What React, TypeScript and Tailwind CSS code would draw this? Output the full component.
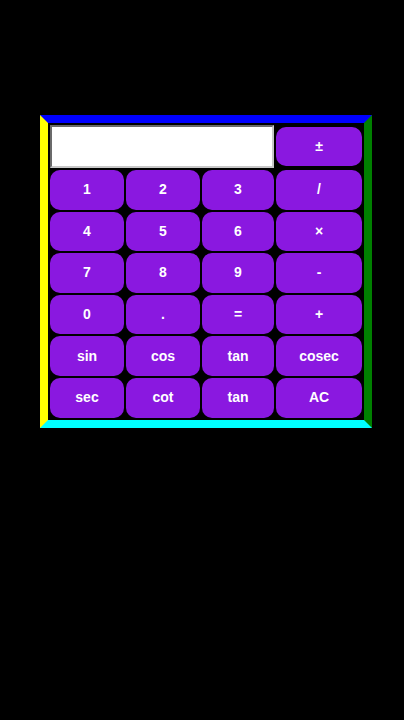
const rows = [
  ['1', '2', '3', '/'],
  ['4', '5', '6', '×'],
  ['7', '8', '9', '-'],
  ['0', '.', '=', '+'],
  ['sin', 'cos', 'tan', 'cosec'],
  ['sec', 'cot', 'tan', 'AC'],
];

function Key({ label }: { label: string }) {
  return (
    <button
      type="button"
      className="h-[39.6px] w-full rounded-[10px] bg-[#8a18e0] text-[14px] font-bold text-white"
    >
      {label}
    </button>
  );
}

export default function App() {
  return (
    <div className="min-h-[720px] bg-black pt-[115px] pl-[40px] font-['Liberation_Sans',Arial,sans-serif]">
      <div className="inline-block border-8 border-t-[#0000ff] border-r-[#008000] border-b-[#00ffff] border-l-[#ffff00] bg-black">
        <div className="grid grid-cols-[74px_74px_72px_86px] gap-[2px] p-[2px]">
          <input
            type="text"
            readOnly
            className="col-span-3 h-[43px] border-2 border-t-[#6b6b6b] border-l-[#6b6b6b] border-b-[#c8c8c8] border-r-[#c8c8c8] bg-white outline-none"
          />
          <div className="self-center">
            <Key label="±" />
          </div>
          {rows.flat().map((k, i) => (
            <Key key={i} label={k} />
          ))}
        </div>
      </div>
    </div>
  );
}
